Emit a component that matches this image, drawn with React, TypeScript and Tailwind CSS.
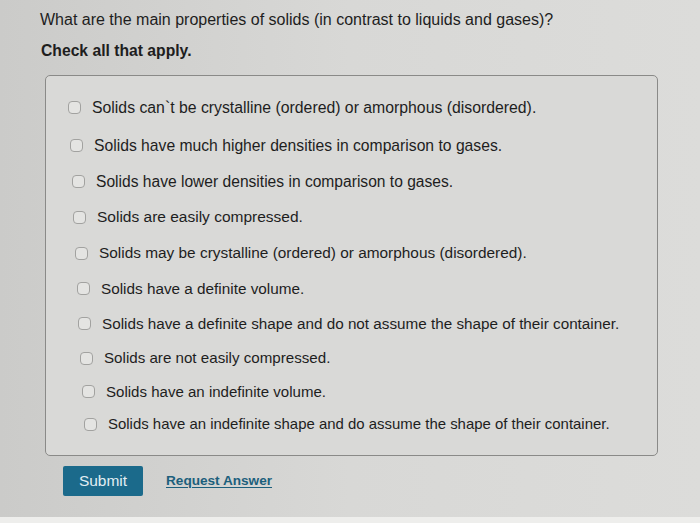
const options = [
  { text: 'Solids can`t be crystalline (ordered) or amorphous (disordered).', row: 'h-[39px] pl-[22px] text-[15.8px]' },
  { text: 'Solids have much higher densities in comparison to gases.', row: 'h-[37px] pl-[24px] text-[15.7px]' },
  { text: 'Solids have lower densities in comparison to gases.', row: 'h-[35px] pl-[26px] text-[15.6px]' },
  { text: 'Solids are easily compressed.', row: 'h-[36px] pl-[27px] text-[15.5px]' },
  { text: 'Solids may be crystalline (ordered) or amorphous (disordered).', row: 'h-[36px] pl-[29px] text-[15.4px]' },
  { text: 'Solids have a definite volume.', row: 'h-[35px] pl-[31px] text-[15.3px]' },
  { text: 'Solids have a definite shape and do not assume the shape of their container.', row: 'h-[35px] pl-[32px] text-[15.25px]' },
  { text: 'Solids are not easily compressed.', row: 'h-[34px] pl-[34px] text-[15.15px]' },
  { text: 'Solids have an indefinite volume.', row: 'h-[33px] pl-[36px] text-[15.05px]' },
  { text: 'Solids have an indefinite shape and do assume the shape of their container.', row: 'h-[33px] pl-[38px] text-[14.95px]' },
];

export default function App() {
  return (
    <div
      className="w-[700px] h-[523px] overflow-hidden bg-gradient-to-r from-[#cbcbc9] via-[#d8d8d6] to-[#dcdcda] text-[#1e1e1e] flex flex-col"
      style={{ fontFamily: '"Liberation Sans", Arial, sans-serif' }}
    >
      <div className="pl-[40px] pt-[9px] text-[16px] leading-[22px]">
        What are the main properties of solids (in contrast to liquids and gases)?
      </div>
      <div className="pl-[41px] pt-[9px] text-[15.7px] leading-[22px] font-bold">Check all that apply.</div>

      <div className="ml-[45px] mt-[13px] w-[613px] h-[381px] border border-[#8a8a88] rounded-[5px] bg-[#d9d9d7] pt-[12px] flex flex-col">
        {options.map((o) => (
          <label key={o.text} className={`flex items-center ${o.row}`}>
            <span className="w-[13px] h-[13px] rounded-[4px] border-[1.5px] border-[#a2a2a0] bg-[#e4e4e2] shrink-0" />
            <span className="ml-[11px] leading-none">{o.text}</span>
          </label>
        ))}
      </div>

      <div className="flex items-center pl-[63px] mt-[10px]">
        <button className="w-[80px] h-[30px] rounded-[2px] bg-[#1b6a8b] text-[#e2eef3] text-[15.5px]">Submit</button>
        <a className="ml-[23px] text-[#1c5f7c] text-[13.6px] font-bold underline underline-offset-2">Request Answer</a>
      </div>

      <div className="mt-auto h-[6px] bg-[#eeeeec]" />
    </div>
  );
}
